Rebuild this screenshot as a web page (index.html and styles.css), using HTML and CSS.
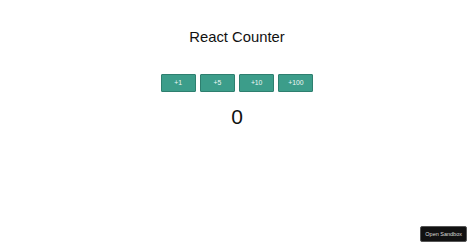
FILE: index.html
```html
<!DOCTYPE html>
<html>
<head>
<meta charset="utf-8">
<link rel="stylesheet" href="styles.css">
</head>
<body>
<div class="app">
  <h1 class="title">React Counter</h1>
  <div class="buttons">
    <button class="btn">+1</button>
    <button class="btn">+5</button>
    <button class="btn">+10</button>
    <button class="btn">+100</button>
  </div>
  <div class="count">0</div>
</div>
<a class="sandbox">Open Sandbox</a>
</body>
</html>
```
FILE: styles.css
```css
html, body {
  margin: 0;
  padding: 0;
  background: #fff;
  height: 100%;
}
body {
  font-family: "Liberation Sans", Arial, sans-serif;
  color: #111;
}
.app {
  display: flex;
  flex-direction: column;
  align-items: center;
  padding-top: 28px;
}
.title {
  margin: 0;
  font-size: 14.8px;
  font-weight: normal;
  line-height: 18px;
}
.buttons {
  display: flex;
  gap: 4.3px;
  margin-top: 28px;
}
.btn {
  width: 35px;
  height: 18px;
  padding: 0;
  background: #3c9d8a;
  border: 1px solid #2e7f6f;
  border-radius: 1px;
  color: #eef7f5;
  font-family: "Liberation Sans", Arial, sans-serif;
  font-size: 6.8px;
  line-height: 16px;
}
.count {
  margin-top: 12px;
  font-size: 21px;
  line-height: 26px;
}
.sandbox {
  position: fixed;
  right: 7px;
  bottom: 6px;
  background: #111;
  border: 1px solid #555;
  border-radius: 2px;
  color: #ddd;
  font-size: 5.5px;
  padding: 0 4px;
  height: 14px;
  line-height: 14px;
}
```
